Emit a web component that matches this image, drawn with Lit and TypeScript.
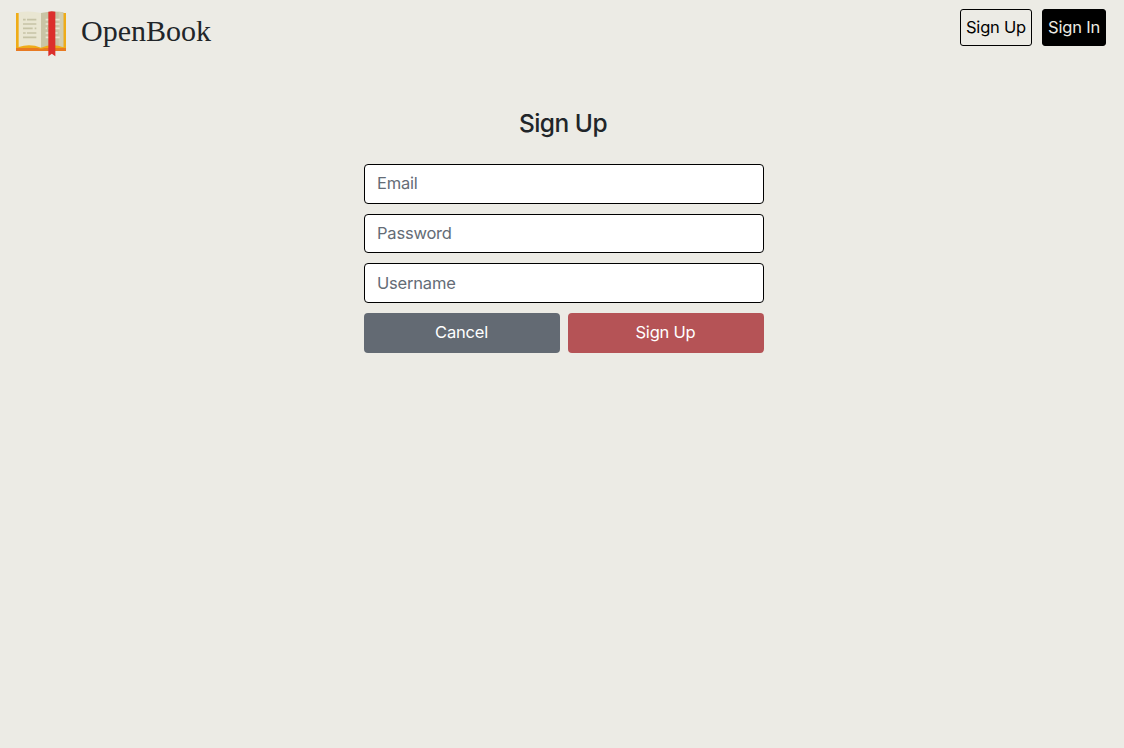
import { LitElement, css, html } from 'lit';
import { customElement, property } from 'lit/decorators.js';

@customElement('book-logo')
export class BookLogo extends LitElement {
    static styles = css`
        :host {
            display: block;
            width: 50px;
            height: 50px;
        }

        svg {
            display: block;
        }
    `;

    protected render() {
        return html`
            <svg width="50" height="50" viewBox="0 0 150 150" aria-hidden="true">
                <rect x="0" y="12" width="150" height="114" fill="#e87a22" />
                <path d="M0 12H150V117H86Q75 122 64 117H0Z" fill="#efac18" />
                <path d="M8 10Q42 4 75 12V116Q42 103 8 114Z" fill="#e9e6d2" />
                <path d="M75 12Q108 4 142 10V114Q108 103 75 116Z" fill="#c9c4a5" />
                <path d="M128 8L142 10V114L128 110Z" fill="#d2cdb0" />
                <g stroke="#c6c3a6" stroke-width="5" fill="none">
                    <path d="M21 32H29M33 32H61M21 45H61M21 58H50M56 58H61M21 72H29M33 72H61M21 85H61" />
                </g>
                <g stroke="#e9e6d2" stroke-width="5" fill="none">
                    <path d="M89 32H131M89 45H131M89 58H93M97 58H131M89 72H125M89 85H131" />
                </g>
                <path d="M97 8Q107 6 118 8V142L107.500 134L97 142Z" fill="#dc2f2c" />
            </svg>
        `;
    }
}

@customElement('nav-bar')
export class NavBar extends LitElement {
    static styles = css`
        :host {
            display: flex;
            justify-content: space-between;
            align-items: flex-start;
            padding: 9px 18px 0 16px;
        }

        .brand {
            display: flex;
            align-items: flex-start;
            gap: 15px;
            height: 52px;
            font-family: "Liberation Serif", "Times New Roman", serif;
            font-size: 30px;
            line-height: 43px;
            letter-spacing: 0;
        }

        .links {
            display: flex;
            gap: 10px;
        }

        .link {
            box-sizing: border-box;
            width: 72px;
            height: 37px;
            padding: 0;
            border: 1px solid #000;
            border-radius: 3px;
            background: transparent;
            color: #000;
            font: inherit;
            letter-spacing: inherit;
            white-space: nowrap;
        }

        .link.dark {
            width: 64px;
            background: #000;
            color: #ecebe5;
        }
    `;

    protected render() {
        return html`
            <div class="brand">
                <book-logo></book-logo>
                <span>OpenBook</span>
            </div>
            <div class="links">
                <button class="link">Sign Up</button>
                <button class="link dark">Sign In</button>
            </div>
        `;
    }
}

@customElement('form-field')
export class FormField extends LitElement {
    @property({type: String})
    label = '';

    @property({type: String})
    type = 'text';

    static styles = css`
        :host {
            display: block;
        }

        input {
            display: block;
            box-sizing: border-box;
            width: 100%;
            height: 39.67px;
            padding: 0 12px 0.7px;
            border: 1px solid #000;
            border-radius: 4px;
            background: #fff;
            color: #212529;
            font: inherit;
            letter-spacing: inherit;
            outline: none;
        }

        input::placeholder {
            color: #646c76;
            opacity: 1;
        }
    `;

    protected render() {
        return html`<input type=${this.type} placeholder=${this.label}>`;
    }
}

@customElement('sign-up-form')
export class SignUpForm extends LitElement {
    static styles = css`
        :host {
            display: block;
            width: 400px;
            margin: 47px auto 0;
            padding-left: 4px;
        }

        h1 {
            margin: 0 0 26px;
            padding-right: 2px;
            font-size: 24.500px;
            font-weight: 500;
            line-height: 30px;
            letter-spacing: -0.5px;
            text-align: center;
        }

        form {
            display: flex;
            flex-direction: column;
            gap: 10px;
        }

        .actions {
            display: grid;
            grid-template-columns: 1fr 1fr;
            gap: 8px;
        }

        .btn {
            height: 40px;
            padding: 0 1px 2px 0;
            border: 0;
            border-radius: 4px;
            background: #636a73;
            color: #fff;
            font: inherit;
            letter-spacing: inherit;
        }

        .btn.primary {
            background: #b55356;
        }
    `;

    protected render() {
        return html`
            <h1>Sign Up</h1>
            <form>
                <form-field label="Email" type="email"></form-field>
                <form-field label="Password" type="password"></form-field>
                <form-field label="Username"></form-field>
                <div class="actions">
                    <button class="btn" type="button">Cancel</button>
                    <button class="btn primary" type="button">Sign Up</button>
                </div>
            </form>
        `;
    }
}

@customElement('app-root')
export class AppRoot extends LitElement {
    static styles = css`
        :host {
            display: block;
            min-height: 100vh;
            background: #ecebe5;
            color: #212529;
            font-family: Inter, "Liberation Sans", sans-serif;
            font-size: 16.500px;
            line-height: 1.5;
            letter-spacing: -0.2px;
        }
    `;

    protected render() {
        return html`
            <nav-bar></nav-bar>
            <sign-up-form></sign-up-form>
        `;
    }
}
